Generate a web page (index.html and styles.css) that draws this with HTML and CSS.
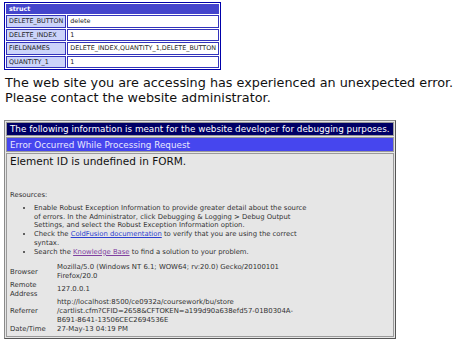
FILE: index.html
```html
<!DOCTYPE html>
<html lang="en">

<head>
    <meta charset="UTF-8">
    <title>Error Occurred While Processing Request</title>
    <link rel="stylesheet" href="styles.css">
</head>

<body>
    <!-- cfdump of FORM -->
    <table class="cfdump">
        <tr>
            <th colspan="2">struct</th>
        </tr>
        <tr>
            <td class="key">DELETE_BUTTON</td>
            <td class="val">delete</td>
        </tr>
        <tr>
            <td class="key">DELETE_INDEX</td>
            <td class="val">1</td>
        </tr>
        <tr>
            <td class="key">FIELDNAMES</td>
            <td class="val">DELETE_INDEX,QUANTITY_1,DELETE_BUTTON</td>
        </tr>
        <tr>
            <td class="key">QUANTITY_1</td>
            <td class="val">1</td>
        </tr>
    </table>

    <p class="site-error">The web site you are accessing has experienced an unexpected error.<br>Please contact the website administrator.</p>

    <!-- Debug info -->
    <table class="error-box">
        <tr>
            <td class="dev-note">The following information is meant for the website developer for debugging purposes.</td>
        </tr>
        <tr>
            <td class="error-title">Error Occurred While Processing Request</td>
        </tr>
        <tr>
            <td class="error-body">
                <div class="error-msg">Element ID is undefined in FORM.</div>

                <div class="resources">
                    <p>Resources:</p>
                    <ul>
                        <li>Enable Robust Exception Information to provide greater detail about the source<br>of errors. In the Administrator, click Debugging &amp; Logging &gt; Debug Output<br>Settings, and select the Robust Exception Information option.</li>
                        <li>Check the <a href="#" class="link">ColdFusion documentation</a> to verify that you are using the correct<br>syntax.</li>
                        <li>Search the <a href="#" class="link visited">Knowledge Base</a> to find a solution to your problem.</li>
                    </ul>
                </div>

                <table class="env">
                    <tr>
                        <td class="env-key">Browser</td>
                        <td>Mozilla/5.0 (Windows NT 6.1; WOW64; rv:20.0) Gecko/20100101<br>Firefox/20.0</td>
                    </tr>
                    <tr>
                        <td class="env-key">Remote<br>Address</td>
                        <td>127.0.0.1</td>
                    </tr>
                    <tr>
                        <td class="env-key">Referrer</td>
                        <td>http://localhost:8500/ce0932a/coursework/bu/store<br>/cartlist.cfm?CFID=2658&amp;CFTOKEN=a199d90a638efd57-01B0304A-<br>B691-8641-13506CEC2694536E</td>
                    </tr>
                    <tr>
                        <td class="env-key">Date/Time</td>
                        <td>27-May-13 04:19 PM</td>
                    </tr>
                </table>
            </td>
        </tr>
    </table>
</body>

</html>
```

FILE: styles.css
```css
/* Base */
body {
    margin: 0;
    padding: 2px 4px;
    background-color: #ffffff;
    color: #000000;
    font-family: Verdana, "DejaVu Sans", sans-serif;
}

/* cfdump struct */
.cfdump {
    border: 1px solid #0000aa;
    border-spacing: 1px;
    font-size: 6.4px;
    background-color: #ffffff;
}

.cfdump th {
    background-color: #4444cc;
    color: #ffffff;
    text-align: left;
    font-weight: bold;
    height: 10px;
    padding: 0 3px;
}

.cfdump td {
    height: 10.5px;
    padding: 0 2px;
    border: 1px solid #3333bb;
}

.cfdump .key {
    background-color: #ccd4fa;
    color: #222222;
    white-space: nowrap;
}

.cfdump .val {
    color: #222222;
    white-space: nowrap;
}

/* Public message */
.site-error {
    margin: 6px 1px 15px;
    font-size: 12.8px;
    line-height: 14.5px;
    color: #111111;
}

/* Debug box */
.error-box {
    width: 392px;
    border: 1px solid #8a8a8a;
    border-right-color: #555555;
    border-bottom-color: #555555;
    border-spacing: 1px;
    background-color: #e6e6e6;
}

.error-box > tbody > tr > td {
    border: 1px solid #9a9a9a;
    padding: 0 3px;
    white-space: nowrap;
}

.dev-note {
    background-color: #000066;
    color: #ffffff;
    font-size: 8.8px;
    height: 12px;
}

.error-title {
    background-color: #4646ee;
    color: #e8e8ff;
    font-size: 8.8px;
    height: 13px;
}

.error-body {
    vertical-align: top;
    font-size: 6.85px;
    color: #333333;
    padding-bottom: 2px !important;
}

.error-msg {
    font-size: 10.5px;
    color: #111111;
    padding-top: 1px;
    height: 36px;
}

.resources p {
    margin: 0 0 4px;
    line-height: 9px;
}

.resources ul {
    margin: 0 0 7px;
    padding-left: 24px;
    line-height: 8.7px;
}

.link {
    color: #2a3fd0;
}

.link.visited {
    color: #8040a0;
}

.env {
    border-spacing: 0;
    font-size: 6.9px;
    line-height: 8.8px;
    color: #333333;
}

.env td {
    padding: 0;
    vertical-align: middle;
}

.env .env-key {
    width: 47px;
}
```
